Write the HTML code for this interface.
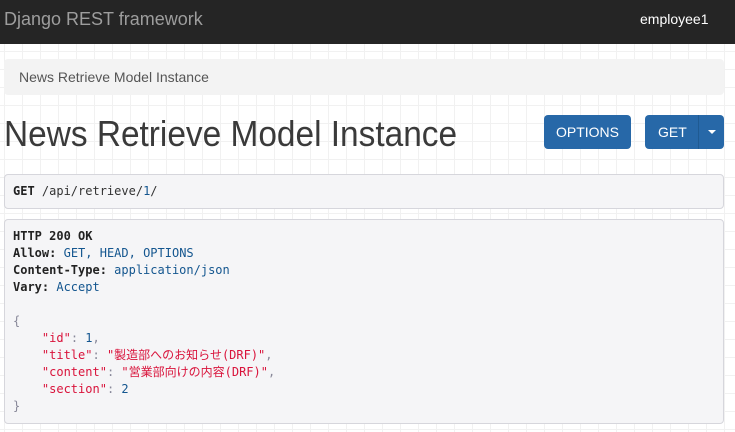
<!DOCTYPE html>
<html><head><meta charset="utf-8"><style>
*{box-sizing:border-box}
body{margin:0;width:735px;height:432px;overflow:hidden;font-family:"Liberation Sans",Helvetica,Arial,sans-serif;
background-color:#fff;
background-image:linear-gradient(to right,#f1f1f1 1px,transparent 1px),linear-gradient(to bottom,#f1f1f1 1px,transparent 1px);
background-size:18px 18px;background-position:4px 51px;}
.nav{position:absolute;left:0;top:0;width:735px;height:44px;background:#252525;}
.brand{position:absolute;left:4px;top:9px;font-size:18px;color:#9d9d9d;}
.user{position:absolute;left:640px;top:11px;font-size:14px;color:#fff;}
.bc{position:absolute;left:4px;top:59px;width:720px;height:36px;background:#f3f3f3;border-radius:4px;font-size:14px;color:#555;padding:10px 15px;}
h1{position:absolute;left:4px;top:113px;margin:0;font-size:36px;font-weight:300;color:#3a3a3a;transform:scaleX(0.928);transform-origin:0 0;white-space:nowrap;}
.btn{position:absolute;top:115px;height:34px;background:#2768a8;color:#fff;font-size:14px;border-radius:4px;text-align:center;line-height:34px;}
.caret{position:absolute;left:708px;top:130px;width:0;height:0;border-left:4px solid transparent;border-right:4px solid transparent;border-top:4px solid #fff;}
pre{position:absolute;left:4px;margin:0;width:720px;background:#f5f5f7;border:1px solid #d6d6dc;border-radius:4px;font-family:"DejaVu Sans Mono","Liberation Mono","Noto Sans CJK JP",monospace;font-size:12px;line-height:17px;color:#333;padding:0 8px;}
b{font-weight:bold;color:#222}
.l{color:#14568f}.s{color:#d9133b}.p{color:#889}
</style></head><body>
<div class="nav"><div class="brand">Django REST framework</div><div class="user">employee1</div></div>
<div class="bc">News Retrieve Model Instance</div>
<h1>News Retrieve Model Instance</h1>
<div class="btn" style="left:544px;width:87px">OPTIONS</div>
<div class="btn" style="left:645px;width:79px;text-align:left;padding-left:13px">GET</div>
<div style="position:absolute;left:698px;top:115px;width:1px;height:34px;background:#1f5a92"></div>
<div class="caret"></div>
<pre style="top:174px;height:35px;padding-top:8px"><b>GET</b> /api/retrieve/<span class="l">1</span>/</pre>
<pre style="top:219px;height:205px;padding-top:8px"><b>HTTP 200 OK</b>
<b>Allow:</b> <span class="l">GET, HEAD, OPTIONS</span>
<b>Content-Type:</b> <span class="l">application/json</span>
<b>Vary:</b> <span class="l">Accept</span>

<span class="p">{</span>
    <span class="s">"id"</span><span class="p">:</span> <span class="l">1</span><span class="p">,</span>
    <span class="s">"title"</span><span class="p">:</span> <span class="s">"製造部へのお知らせ(DRF)"</span><span class="p">,</span>
    <span class="s">"content"</span><span class="p">:</span> <span class="s">"営業部向けの内容(DRF)"</span><span class="p">,</span>
    <span class="s">"section"</span><span class="p">:</span> <span class="l">2</span>
<span class="p">}</span></pre>
</body></html>
